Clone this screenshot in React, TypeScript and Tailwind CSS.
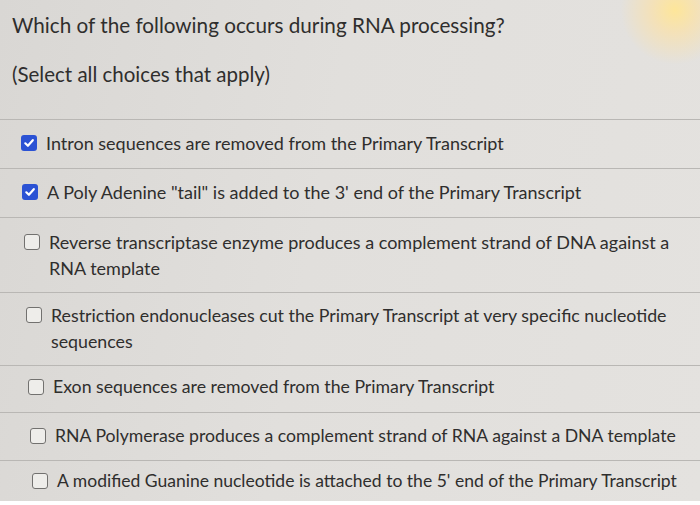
import React from "react";

function Box({ checked }: { checked: boolean }) {
  if (checked) {
    return (
      <span className="flex h-[16px] w-[16px] shrink-0 items-center justify-center rounded-[3px] bg-[#2b52d4]">
        <svg width="12" height="12" viewBox="0 0 12 12" fill="none">
          <path d="M2.3 6.3 L4.9 8.8 L9.8 3.2" stroke="#ffffff" strokeWidth="2.2" strokeLinecap="round" strokeLinejoin="round" />
        </svg>
      </span>
    );
  }
  return <span className="h-[16px] w-[16px] shrink-0 rounded-[3px] border-[1.5px] border-[#72716f] bg-[#eeedea]" />;
}

type Row = { checked: boolean; lines: string[]; cls: string; text: string };

const rows: Row[] = [
  { checked: true, lines: ["Intron sequences are removed from the Primary Transcript"], cls: "h-[49px] pl-[21px] pt-[11px]", text: "text-[18px] ml-[9px]" },
  { checked: true, lines: ['A Poly Adenine "tail" is added to the 3\' end of the Primary Transcript'], cls: "h-[49px] pl-[22px] pt-[11px]", text: "text-[18px] ml-[9px]" },
  {
    checked: false,
    lines: ["Reverse transcriptase enzyme produces a complement strand of DNA against a", "RNA template"],
    cls: "h-[75px] pl-[24px] pt-[12px]",
    text: "text-[18px] ml-[9px]",
  },
  {
    checked: false,
    lines: ["Restriction endonucleases cut the Primary Transcript at very specific nucleotide", "sequences"],
    cls: "h-[73px] pl-[26px] pt-[10px]",
    text: "text-[17.8px] ml-[9px]",
  },
  { checked: false, lines: ["Exon sequences are removed from the Primary Transcript"], cls: "h-[47px] pl-[28px] pt-[9px]", text: "text-[17.7px] ml-[9px]" },
  { checked: false, lines: ["RNA Polymerase produces a complement strand of RNA against a DNA template"], cls: "h-[48px] pl-[30px] pt-[11px]", text: "text-[17.65px] ml-[9px]" },
  { checked: false, lines: ["A modified Guanine nucleotide is attached to the 5' end of the Primary Transcript"], cls: "h-[41px] pl-[32px] pt-[8px]", text: "text-[17.55px] ml-[9px]" },
];

export default function App() {
  return (
    <div className="relative h-[505px] w-[700px] overflow-hidden bg-white font-['Lato','Liberation_Sans',sans-serif] text-[#2f2e2d]">
      <div className="h-[501px] w-full bg-[linear-gradient(100deg,#d9d7d4_0%,#e1dfdc_45%,#e4e2df_100%)]">
        <div className="h-[119px] px-[12px] pt-[11px]">
          <div className="text-[20.7px] leading-[28px]">Which of the following occurs during RNA processing?</div>
          <div className="mt-[21px] text-[20.5px] leading-[28px]">(Select all choices that apply)</div>
        </div>
        {rows.map((r, i) => (
          <div key={i} className={`flex items-start border-t border-[#b9b7b4] ${r.cls}`}>
            <div className="flex h-[24px] items-center">
              <Box checked={r.checked} />
            </div>
            <div className={`leading-[24px] ${r.text}`}>
              {r.lines.map((l, j) => (
                <div key={j} className={j > 0 ? "mt-[2px]" : ""}>
                  {l}
                </div>
              ))}
            </div>
          </div>
        ))}
      </div>
      <div className="pointer-events-none absolute right-[-30px] top-[-45px] h-[110px] w-[110px] rounded-full bg-[radial-gradient(circle,rgba(255,230,150,0.95)_0%,rgba(255,225,160,0.6)_30%,rgba(240,225,200,0)_70%)]" />
    </div>
  );
}
